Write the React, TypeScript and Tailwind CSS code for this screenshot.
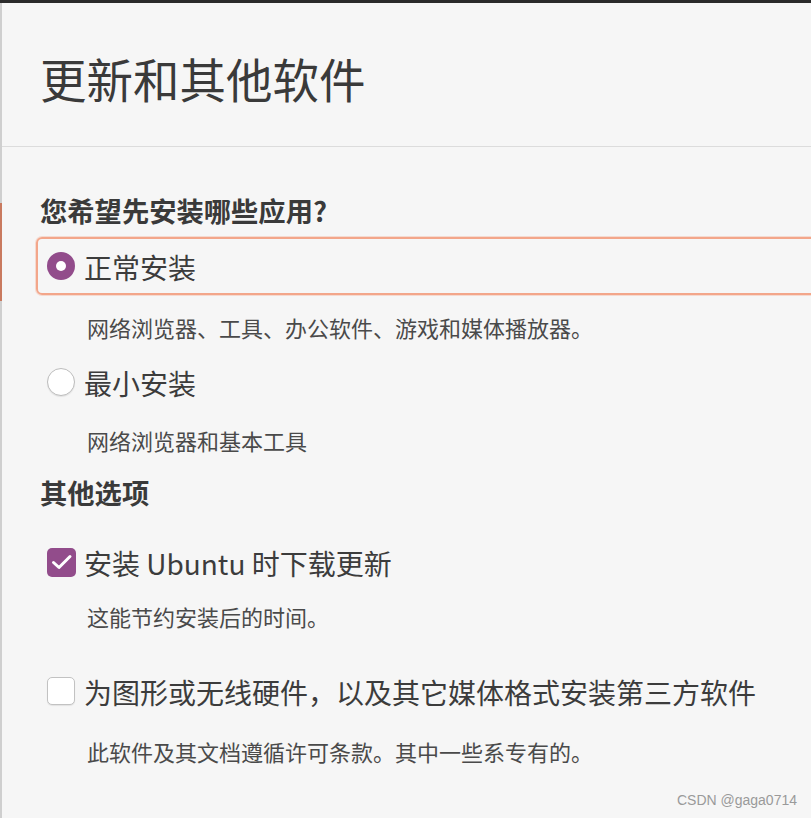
import React from "react";

const cjk = { fontFamily: '"Noto Sans CJK SC", "Noto Sans", sans-serif' };

function RadioOn() {
  return (
    <div className="w-[28px] h-[28px] rounded-full bg-[#924c8b] flex items-center justify-center shrink-0">
      <div className="w-[10px] h-[10px] rounded-full bg-white" />
    </div>
  );
}

function RadioOff() {
  return (
    <div className="w-[28px] h-[28px] rounded-full bg-white border-[1.5px] border-[#bdbdbd] shadow-[0_1px_1px_rgba(0,0,0,0.08)] shrink-0" />
  );
}

function CheckOn() {
  return (
    <div className="w-[29px] h-[29px] rounded-[5px] bg-[#924c8b] shrink-0">
      <svg width="29" height="29" viewBox="0 0 29 29" fill="none" className="block">
        <path d="M6.5 14.5 L12 19.5 L23 8.5" stroke="white" strokeWidth="3" strokeLinecap="round" strokeLinejoin="round" />
      </svg>
    </div>
  );
}

function CheckOff() {
  return (
    <div className="w-[28px] h-[28px] rounded-[5px] bg-white border-[1.5px] border-[#c2c2c2] shadow-[0_1px_1px_rgba(0,0,0,0.08)] shrink-0" />
  );
}

export default function App() {
  return (
    <div
      className="w-[811px] h-[818px] bg-[#f6f6f6] relative overflow-hidden flex flex-col text-[#3c3c3c]"
      style={cjk}
    >
      <div className="h-[3px] bg-[#2b2b2b] shrink-0" />
      <div className="flex flex-1">
        <div className="w-[2px] flex flex-col shrink-0">
          <div className="h-[200px] bg-[#cfcfcf]" />
          <div className="h-[98px] bg-[#c97a5f]" />
          <div className="flex-1 bg-[#cfcfcf]" />
        </div>
        <div className="flex-1 flex flex-col min-w-0">
          <div className="h-[144px] flex items-center pl-[38px] pt-[6px] border-b border-[#dcdcdc]">
            <div className="text-[46.5px] leading-[56px] text-[#3a3a3a]">更新和其他软件</div>
          </div>

          <div className="flex flex-col pl-[34px]">
            <div className="mt-[47px] h-[32px] flex items-center pl-[4px] text-[27.3px] font-bold text-[#3a3a3a]">
              您希望先安装哪些应用?
            </div>

            <div className="mt-[11px] h-[58px] w-[800px] border-2 border-[#f3a68a] shadow-[0_0_0_1px_rgba(243,166,138,0.35)] rounded-[6px] flex items-center pl-[9px] gap-[9px]">
              <RadioOn />
              <span className="text-[28px] leading-[32px] mt-[2px]">正常安装</span>
            </div>

            <div className="mt-[19px] h-[26px] flex items-center pl-[51px] text-[22px] text-[#4a4a4a]">
              网络浏览器、工具、办公软件、游戏和媒体播放器。
            </div>

            <div className="mt-[22px] h-[40px] flex items-center pl-[11px] gap-[9px]">
              <RadioOff />
              <span className="text-[28px] leading-[32px] mt-[2px]">最小安装</span>
            </div>

            <div className="mt-[25px] h-[26px] flex items-center pl-[51px] text-[22px] text-[#4a4a4a]">
              网络浏览器和基本工具
            </div>

            <div className="mt-[23px] h-[32px] flex items-center pl-[4px] text-[27.3px] font-bold text-[#3a3a3a]">
              其他选项
            </div>

            <div className="mt-[34px] h-[40px] flex items-center pl-[11px] gap-[8px]">
              <CheckOn />
              <span className="text-[28px] leading-[32px] mt-[2px]">安装 Ubuntu 时下载更新</span>
            </div>

            <div className="mt-[21px] h-[26px] flex items-center pl-[51px] text-[22px] text-[#4a4a4a]">
              这能节约安装后的时间。
            </div>

            <div className="mt-[42px] h-[40px] flex items-center pl-[11px] gap-[9px]">
              <CheckOff />
              <span className="text-[28px] leading-[32px] mt-[2px] whitespace-nowrap">
                为图形或无线硬件，以及其它媒体格式安装第三方软件
              </span>
            </div>

            <div className="mt-[27px] h-[26px] flex items-center pl-[51px] text-[22px] text-[#4a4a4a]">
              此软件及其文档遵循许可条款。其中一些系专有的。
            </div>
          </div>
        </div>
      </div>
      <div
        className="absolute right-[14px] bottom-[7px] text-[14px] text-[#9a9a9a]"
        style={{ fontFamily: '"Liberation Sans", sans-serif' }}
      >
        CSDN @gaga0714
      </div>
    </div>
  );
}
